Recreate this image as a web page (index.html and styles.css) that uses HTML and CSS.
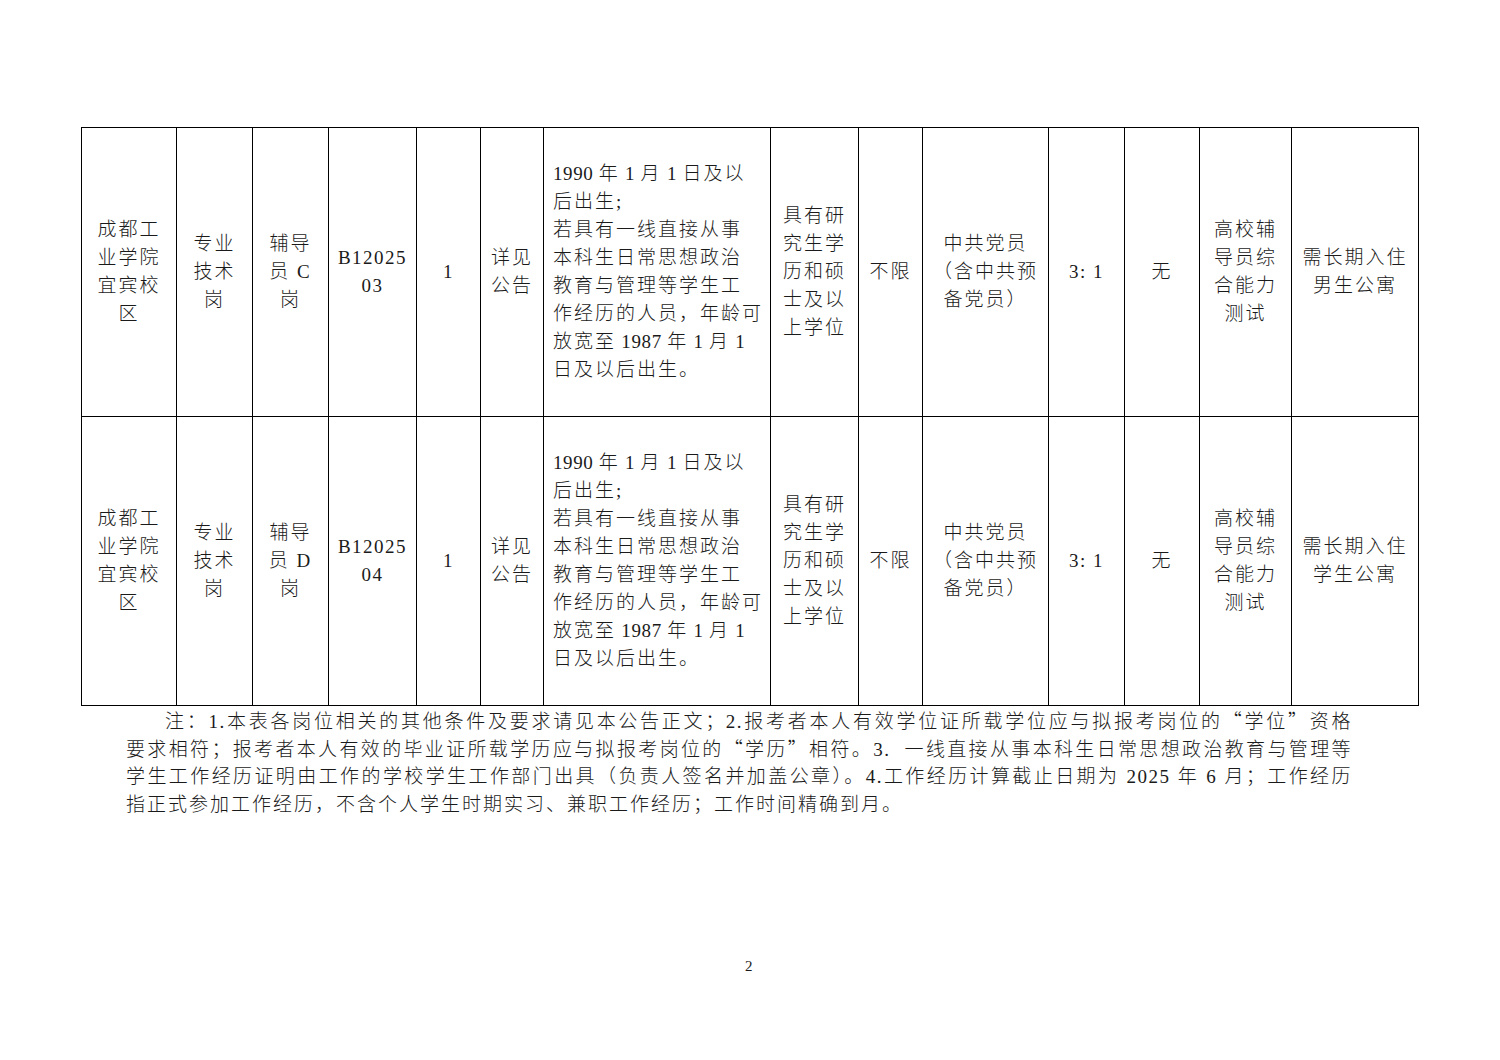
FILE: index.html
```html
<!DOCTYPE html>
<html lang="zh-CN">
<head>
<meta charset="utf-8">
<title>岗位表</title>
<link rel="stylesheet" href="styles.css">
</head>
<body>
<div class="page">
  <table class="jobs">
    <colgroup>
      <col class="c1"><col class="c2"><col class="c3"><col class="c4"><col class="c5"><col class="c6"><col class="c7"><col class="c8"><col class="c9"><col class="c10"><col class="c11"><col class="c12"><col class="c13"><col class="c14">
    </colgroup>
    <tbody>
      <tr>
        <td>成都工<br>业学院<br>宜宾校<br>区</td>
        <td>专业<br>技术<br>岗</td>
        <td>辅导<br>员 C<br>岗</td>
        <td class="num">B12025<br>03</td>
        <td class="num">1</td>
        <td>详见<br>公告</td>
        <td class="left"><span class="d">1990 </span>年<span class="d"> 1 </span>月<span class="d"> 1 </span>日及以<br>后出生;<br>若具有一线直接从事<br>本科生日常思想政治<br>教育与管理等学生工<br>作经历的人员，年龄可<br>放宽至<span class="d"> 1987 </span>年<span class="d"> 1 </span>月<span class="d"> 1</span><br>日及以后出生。</td>
        <td>具有研<br>究生学<br>历和硕<br>士及以<br>上学位</td>
        <td>不限</td>
        <td>中共党员<br>（含中共预<br>备党员）</td>
        <td class="num">3: 1</td>
        <td>无</td>
        <td>高校辅<br>导员综<br>合能力<br>测试</td>
        <td>需长期入住<br>男生公寓</td>
      </tr>
      <tr>
        <td>成都工<br>业学院<br>宜宾校<br>区</td>
        <td>专业<br>技术<br>岗</td>
        <td>辅导<br>员 D<br>岗</td>
        <td class="num">B12025<br>04</td>
        <td class="num">1</td>
        <td>详见<br>公告</td>
        <td class="left"><span class="d">1990 </span>年<span class="d"> 1 </span>月<span class="d"> 1 </span>日及以<br>后出生;<br>若具有一线直接从事<br>本科生日常思想政治<br>教育与管理等学生工<br>作经历的人员，年龄可<br>放宽至<span class="d"> 1987 </span>年<span class="d"> 1 </span>月<span class="d"> 1</span><br>日及以后出生。</td>
        <td>具有研<br>究生学<br>历和硕<br>士及以<br>上学位</td>
        <td>不限</td>
        <td>中共党员<br>（含中共预<br>备党员）</td>
        <td class="num">3: 1</td>
        <td>无</td>
        <td>高校辅<br>导员综<br>合能力<br>测试</td>
        <td>需长期入住<br>学生公寓</td>
      </tr>
    </tbody>
  </table>
  <div class="notes">
    <div class="line first">注：1.本表各岗位相关的其他条件及要求请见本公告正文；2.报考者本人有效学位证所载学位应与拟报考岗位的<span class="q">“</span>学位<span class="q">”</span>资格</div>
    <div class="line">要求相符；报考者本人有效的毕业证所载学历应与拟报考岗位的<span class="q">“</span>学历<span class="q">”</span>相符。3.&nbsp;&nbsp;一线直接从事本科生日常思想政治教育与管理等</div>
    <div class="line">学生工作经历证明由工作的学校学生工作部门出具（负责人签名并加盖公章）。4.工作经历计算截止日期为 2025 年 6 月；工作经历</div>
    <div class="line last">指正式参加工作经历，不含个人学生时期实习、兼职工作经历；工作时间精确到月。</div>
  </div>
  <div class="pageno">2</div>
</div>
</body>
</html>
```

FILE: styles.css
```css
html, body {
  margin: 0;
  padding: 0;
  background: #ffffff;
}

body {
  font-family: "Liberation Serif", "Noto Sans CJK SC", serif;
  color: #1a1a1a;
}

.page {
  width: 1500px;
  height: 1060px;
  box-sizing: border-box;
  padding: 127px 0 0 81px;
}

.jobs {
  border-collapse: collapse;
  table-layout: fixed;
  width: 1338px;
}

.c1 { width: 95px; }
.c2 { width: 76px; }
.c3 { width: 76px; }
.c4 { width: 88px; }
.c5 { width: 64px; }
.c6 { width: 63px; }
.c7 { width: 227px; }
.c8 { width: 88px; }
.c9 { width: 64px; }
.c10 { width: 126px; }
.c11 { width: 76px; }
.c12 { width: 75px; }
.c13 { width: 92px; }
.c14 { width: 127px; }

.jobs td {
  border: 1.5px solid #000;
  height: 289px;
  box-sizing: border-box;
  padding: 0;
  text-align: center;
  vertical-align: middle;
  font-size: 19px;
  line-height: 28px;
  letter-spacing: 2px;
  font-weight: 300;
  white-space: nowrap;
}

.jobs td.num {
  letter-spacing: 1.5px;
}

.jobs td.left {
  text-align: left;
  padding-left: 9px;
}

.jobs td.left .d {
  letter-spacing: 0.6px;
}

.notes {
  width: 1226px;
  margin-left: 45px;
  padding-top: 2px;
  font-size: 19px;
  line-height: 27.5px;
  letter-spacing: 1.5px;
  font-weight: 300;
}

.notes .q {
  font-family: "Noto Sans CJK SC", sans-serif;
  line-height: 0;
}

.notes .line {
  height: 27.5px;
  text-align: justify;
  text-align-last: justify;
  white-space: nowrap;
}

.notes .line.first {
  padding-left: 39px;
}

.notes .line.last {
  text-align-last: left;
  letter-spacing: 2px;
}

.pageno {
  margin-top: 139px;
  margin-left: 664px;
  font-size: 15px;
  line-height: 18px;
}
```
